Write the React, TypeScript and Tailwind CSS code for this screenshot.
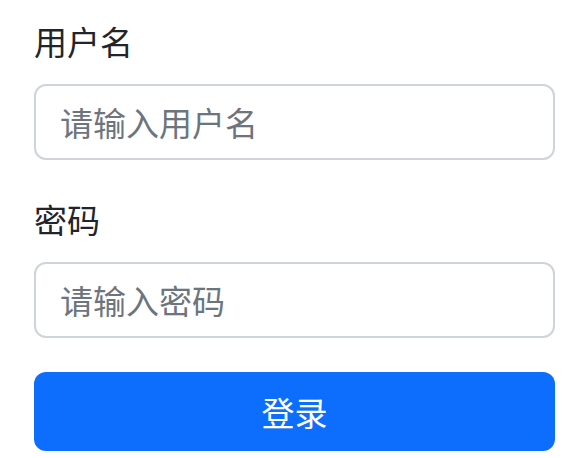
export default function App() {
  return (
    <div
      className="min-h-screen bg-white pt-[17px] pl-[34px]"
      style={{ fontFamily: '"Noto Sans CJK SC", "Noto Sans", sans-serif' }}
    >
      <form className="w-[521px]" onSubmit={e => e.preventDefault()}>
        <div className="mb-[35px]">
          <label htmlFor="username" className="mb-[19px] block text-[33px] leading-[48px] text-[#212529]">
            用户名
          </label>
          <input
            id="username"
            type="text"
            placeholder="请输入用户名"
            className="block h-[76px] w-full rounded-[12px] border-2 border-[#ced4da] bg-white px-[24px] text-[33px] leading-[48px] text-[#212529] outline-none placeholder:text-[#6c757d]"
          />
        </div>
        <div className="mb-[34px]">
          <label htmlFor="password" className="mb-[19px] block text-[33px] leading-[48px] text-[#212529]">
            密码
          </label>
          <input
            id="password"
            type="password"
            placeholder="请输入密码"
            className="block h-[76px] w-full rounded-[12px] border-2 border-[#ced4da] bg-white px-[24px] text-[33px] leading-[48px] text-[#212529] outline-none placeholder:text-[#6c757d]"
          />
        </div>
        <button
          type="submit"
          className="block h-[79px] w-full rounded-[12px] bg-[#0d6efd] text-[33px] leading-[48px] text-white"
        >
          登录
        </button>
      </form>
    </div>
  );
}
